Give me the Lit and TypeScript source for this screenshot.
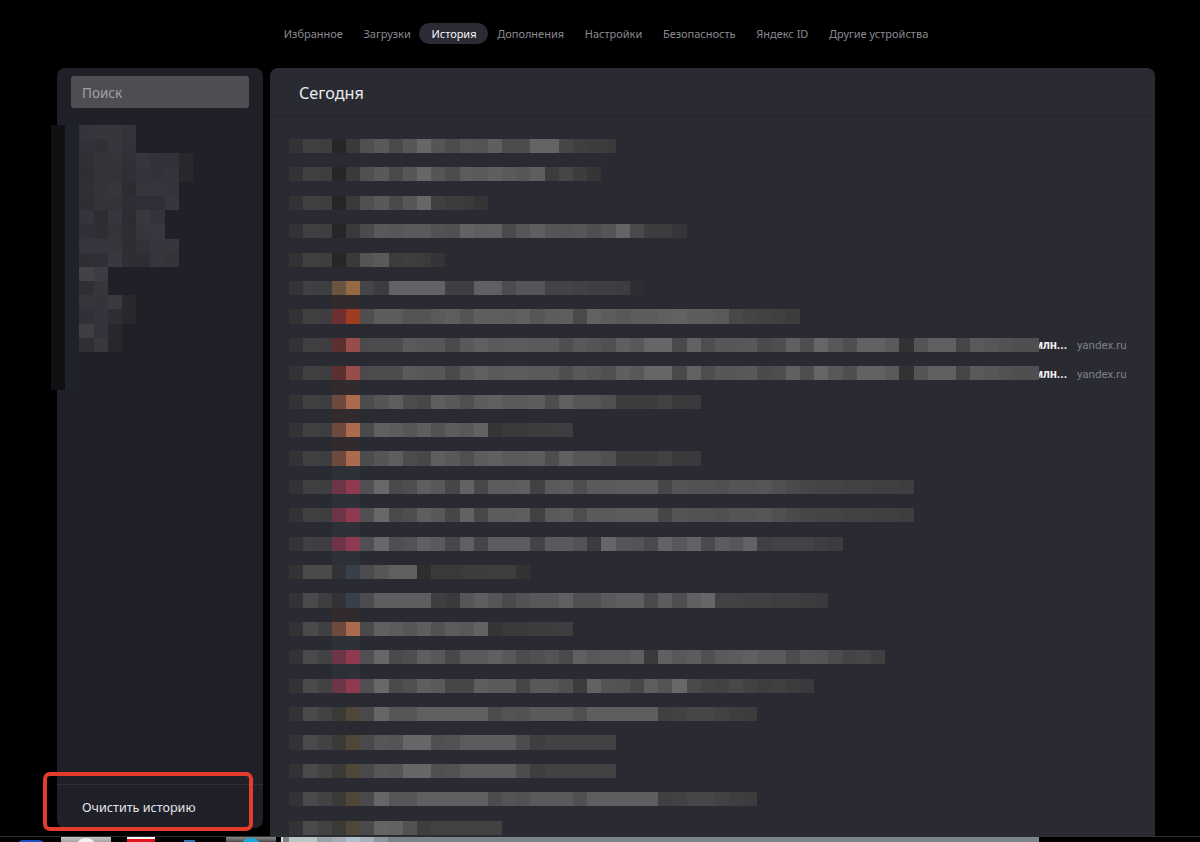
import { LitElement, html, css } from "lit";
import { customElement } from "lit/decorators.js";

const shade = (c: string) => {
  if (c.length === 6) return `#${c}`;
  const v = parseInt(c, 16);
  return `rgb(${v},${v},${v + 3})`;
};
const cells = (s: string) => s.trim().split(/\s+/).map(shade);

const BASE = "33 40 3e";
const GREY = "26 3a";
const AMBER = "6a5340 956a40";
const RUST = "6d2f2f a03d20";
const BRICK = "5c2f30 974d4a";
const COPPER = "6e4a3c aa6c4c";
const ROSE = "6c3548 903a52";
const STEEL = "33 36404a";
const OLIVE = "3a3a36 4f4838";
const WARM = "332a2e 322b2e";
const COOL = "2e3038 2f3139";

const R1 = "50 59 4a 57 67 55 4c 56 54 5f 4c 4d 64 64 46 3f 3d 3b";
const R2 = "50 59 4a 57 67 55 4c 5c 5a 5f 5a 56 5e 3c 46 3d 35";
const R3 = "50 59 4a 57 67 40 3c 3b 35";
const R4 = "4b 59 57 5a 5a 52 50 63 5e 60 4a 56 5f 55 54 56 4f 55 64 4a 3d 3c 36";
const R5 = "55 5b 3c 3e 3b 34";
const R6 = "46 3d 62 62 62 62 3f 3e 60 60 4c 55 55 43 43 41 3f 3f 3d 2e";
const R7 = "4e 5c 5c 54 54 5a 5e 54 5e 5e 5c 60 56 5c 5e 4a 62 5c 58 5c 5c 60 62 5c 5c 5a 48 44 42 40 3c";
const R8 = "4b 4d 4d 5a 57 57 4a 59 60 5a 5c 5c 5a 5a 4f 59 55 50 5f 58 66 66 4a 62 4e 57 57 58 4b 4e 60 4e 66 58 4f 62 62 5a 32 54 60 60 46 5a 56 52 4f 4f";
const R10 = "4c 55 5e 4c 48 5e 58 50 5c 60 5a 5a 5c 4d 60 56 56 50 3c 3c 3d 42 3b 3a";
const R11 = "4a 60 5c 56 5e 52 5c 58 62 35 3a 3a 3c 3d 3e";
const R13 = "50 68 4a 4e 5e 58 47 62 48 5c 5c 5e 42 5a 5c 4e 5a 5a 5c 5c 5c 46 54 52 52 50 54 54 56 50 4a 46 44 44 42 42 40 40 3e";
const R15 = "50 68 4e 52 60 5a 48 60 46 5c 5c 5c 44 5a 5a 52 3c 66 56 54 4a 62 58 62 4a 5c 56 62 40 42 44 42 3e 3c";
const R16 = "4c 56 60 60 2e 3a 3a 3c 3c 3e 3e 33";
const R17 = "4c 5e 5e 5e 5e 3f 3b 56 5e 56 4a 52 58 58 60 50 50 5a 5e 5e 4a 5c 4e 60 66 42 42 40 40 3e 3e 3c 3a";
const R19 = "50 66 4a 4e 5e 58 48 5a 5a 60 58 4c 50 54 4a 60 58 5a 5a 5e 3a 60 58 5c 50 5a 5c 60 5a 5a 4c 56 54 4c 44 46 40";
const R20 = "50 68 4a 50 5e 5a 46 46 5e 5a 5a 46 58 58 50 3c 62 54 52 48 5e 54 68 4a 44 42 48 42 3e 40 3c 3a";
const R21 = "4a 66 56 56 60 60 60 60 60 4c 54 52 5a 5a 5a 50 5e 5e 5e 5e 5e 40 42 46 46 42 3e 3c";
const R22 = "4a 56 54 66 66 50 52 5c 5c 5c 5c 4c 3e 42 42 42 42 42";

interface Row {
  c: string;
  tint?: string;
  trail?: boolean;
}

const rows: Row[] = [
  { c: `${BASE} ${GREY} ${R1}` },
  { c: `${BASE} ${GREY} ${R2}` },
  { c: `${BASE} ${GREY} ${R3}` },
  { c: `${BASE} ${GREY} ${R4}` },
  { c: `${BASE} ${GREY} ${R5}` },
  { c: `${BASE} ${AMBER} ${R6}`, tint: WARM },
  { c: `${BASE} ${RUST} ${R7}` },
  { c: `${BASE} ${BRICK} ${R8}`, trail: true },
  { c: `${BASE} ${BRICK} ${R8}`, trail: true, tint: WARM },
  { c: `${BASE} ${COPPER} ${R10}`, tint: WARM },
  { c: `${BASE} ${COPPER} ${R11}`, tint: WARM },
  { c: `${BASE} ${COPPER} ${R10}`, tint: COOL },
  { c: `${BASE} ${ROSE} ${R13}`, tint: COOL },
  { c: `${BASE} ${ROSE} ${R13}`, tint: COOL },
  { c: `${BASE} ${ROSE} ${R15}`, tint: COOL },
  { c: `33 4a 4a ${STEEL} ${R16}` },
  { c: `33 4a 3e ${STEEL} ${R17}`, tint: WARM },
  { c: `33 4a 40 ${COPPER} ${R11}`, tint: COOL },
  { c: `33 4a 42 ${ROSE} ${R19}`, tint: COOL },
  { c: `33 4a 42 ${ROSE} ${R20}` },
  { c: `33 4a 42 ${OLIVE} ${R21}` },
  { c: `33 4a 42 ${OLIVE} ${R22}` },
  { c: `33 4a 42 ${OLIVE} ${R22}` },
  { c: `33 4a 42 ${OLIVE} ${R21}` },
  { c: `33 4a 42 ${OLIVE} 4a 64 62 52 3e 42 42 42 42 42` },
];

const side = [
  "33343c 36363c 36373b 33343a",
  "30313a 303136 36373c 31323a",
  "2f3034 34353b 34353a 303136 34353d 32333a 313238 27282b",
  "2e2f33 34353a 33343a 2f3035 33343b 31323a 34353b 27282b",
  "2f3034 34353a 36373c 2c2d30 35363d 35363d 34353b",
  "2e2f35 34353b 33343a 2e2f34 2f3037 2f3035 36373e",
  "33343c 2d2e31 36373c 2c2c34 38393c 33333b",
  "2f3038 2e2f33 34353b 2e2f33 36373a 37383f",
  "35363d 35363d 36373c 2e2f33 31323a 36373e 36373c",
  "2e2f33 2e3036 383940 2e2f33 2e2f36 36373c 34353b",
  "424347 3c3d42",
  "2e2f33 36373b",
  "35363c 34353b 3a3b41 28292c",
  "303138 34353c 2e2f34 28292c",
  "3e3f43 33343b 28292c",
  "2e3036 38393e 26282b",
  "",
  "",
  "",
];

const tabs = ["Избранное", "Загрузки", "История", "Дополнения", "Настройки", "Безопасность", "Яндекс ID", "Другие устройства"];
const barCells = ["b9c7c4", "b9c7c4", "9ba3aa", "a5acb2", "b4c0d0", "a9b1bd", "8f969d"];

@customElement("app-root")
export class AppRoot extends LitElement {
  static styles = css`
    :host {
      display: flex;
      flex-direction: column;
      height: 842px;
      overflow: hidden;
      background: #000;
      font-family: "Noto Sans", "Open Sans", sans-serif;
      position: relative;
    }
    nav {
      height: 68px;
      flex: none;
      box-sizing: border-box;
      display: flex;
      align-items: flex-start;
      justify-content: center;
      padding: 23px 0 0 12px;
      font-size: 11px;
    }
    .tab {
      height: 21px;
      line-height: 22px;
      padding: 0 10.3px;
      color: #8a8a90;
      border-radius: 11px;
      white-space: nowrap;
    }
    .tab.on {
      background: #2a2b34;
      color: #f6f6f8;
      padding: 0 11px 0 12px;
      margin: 0 -0.7px 0 -1.7px;
    }
    .body {
      flex: none;
      height: 768px;
      display: flex;
      gap: 7px;
      padding-left: 57px;
      align-items: flex-start;
    }
    aside {
      position: relative;
      width: 206px;
      height: 760px;
      box-sizing: border-box;
      background: #202128;
      border-radius: 8px;
      display: flex;
      flex-direction: column;
      padding-top: 8px;
    }
    .search {
      margin-left: 14px;
      width: 178px;
      height: 32px;
      box-sizing: border-box;
      padding-left: 11px;
      background: #4d4d52;
      border-radius: 3px;
      color: #a2a2a6;
      font-size: 13.5px;
      line-height: 34px;
    }
    .spacer {
      flex: 1;
    }
    .clear {
      height: 43px;
      border-top: 1px solid #303136;
      padding-left: 25px;
      color: #e6e6ea;
      font-size: 12.6px;
      line-height: 45px;
    }
    .blur {
      position: absolute;
      left: -6px;
      top: 57px;
      height: 265px;
      overflow: hidden;
      display: flex;
      flex-direction: column;
    }
    .blur .line {
      display: flex;
      flex: none;
      height: 14.2px;
    }
    .annot {
      position: absolute;
      left: 43px;
      top: 772px;
      width: 210px;
      height: 59px;
      box-sizing: border-box;
      border: 4px solid #e63c2e;
      border-radius: 7px;
    }
    main {
      width: 885px;
      height: 768px;
      background: #2a2b32;
      border-radius: 8px 8px 0 0;
      overflow: hidden;
      display: flex;
      flex-direction: column;
    }
    header {
      flex: none;
      height: 49px;
      box-sizing: border-box;
      padding-left: 29px;
      border-bottom: 1px solid #222327;
      color: #ececef;
      font-size: 16.2px;
      line-height: 50px;
    }
    .list {
      padding: 21.9px 0 0 19.3px;
      display: flex;
      flex-direction: column;
    }
    .row,
    .gap {
      display: flex;
      flex: none;
      height: 14.215px;
      align-items: center;
      font-family: Roboto, "Noto Sans", sans-serif;
      font-size: 11.5px;
    }
    .cell {
      flex: none;
      width: 14.2px;
      height: 14.2px;
    }
    .mosaic {
      display: flex;
      overflow: hidden;
      position: relative;
      z-index: 1;
    }
    .mosaic.trail {
      width: 749.7px;
    }
    .gap {
      padding-left: 42.6px;
    }
    .cut {
      margin-left: -5px;
      width: 34px;
      padding-top: 1px;
      color: #f0f0f2;
      font-weight: 700;
      font-size: 12px;
      white-space: nowrap;
    }
    .site {
      margin-left: 9px;
      padding-top: 1px;
      color: #808086;
    }
    .taskbar {
      flex: none;
      height: 6px;
      border-top: 1px solid #2e2f30;
      box-sizing: content-box;
      display: flex;
      background: #000;
      overflow: hidden;
    }
    .win {
      margin-left: 17px;
      width: 28px;
      height: 6px;
      margin-top: 3px;
      background: #1d4fc0;
      border-radius: 8px 8px 0 0;
    }
    .btn {
      margin-left: 16px;
      width: 50px;
      background: linear-gradient(#c4c4c4, #9d9d9d);
      display: flex;
      justify-content: center;
    }
    .btn i {
      display: block;
      width: 22px;
      height: 22px;
      margin-top: 1px;
      border-radius: 50%;
      background: #f0f0f0;
    }
    .red {
      margin-left: 16px;
      width: 28px;
      border-top: 2px solid #f5f5f5;
      background: #e0141c;
    }
    .doc {
      margin: 3px 0 0 29px;
      width: 11px;
      background: #3b6fb8;
    }
    .btn.dark {
      margin-left: 31px;
      background: linear-gradient(#8a8a8a, #3d3d3d);
    }
    .btn.dark i {
      background: #1ba6e0;
    }
    .bar {
      margin-left: 5px;
      width: 758px;
      box-sizing: border-box;
      background: #7c8289;
      display: flex;
      border-left: 2px solid #d8d8d8;
      padding-left: 6px;
    }
    .bar .cell {
      height: 6px;
    }
  `;

  private mosaic(r: Row) {
    return html`<div class="mosaic ${r.trail ? "trail" : ""}">
      ${cells(r.c).map((c) => html`<div class="cell" style="background:${c}"></div>`)}
    </div>`;
  }

  render() {
    return html`
      <nav>
        ${tabs.map((t) => html`<div class="tab ${t === "История" ? "on" : ""}">${t}</div>`)}
      </nav>
      <div class="body">
        <aside>
          <div class="search">Поиск</div>
          <div class="spacer"></div>
          <div class="clear">Очистить историю</div>
          <div class="blur">
            ${side.map(
              (l) => html`<div class="line">
                <div class="cell" style="background:#111114"></div>
                <div class="cell" style="background:#20222b"></div>
                ${l ? l.split(" ").map((c) => html`<div class="cell" style="background:#${c}"></div>`) : ""}
              </div>`
            )}
          </div>
        </aside>
        <main>
          <header>Сегодня</header>
          <div class="list">
            ${rows.map(
              (r) => html`
                <div class="row">
                  ${this.mosaic(r)}
                  ${r.trail
                    ? html`<span class="cut">млн...</span><span class="site">yandex.ru</span>`
                    : ""}
                </div>
                <div class="gap">
                  ${r.tint ? cells(r.tint).map((c) => html`<div class="cell" style="background:${c}"></div>`) : ""}
                </div>
              `
            )}
          </div>
        </main>
      </div>
      <div class="taskbar">
        <div class="win"></div>
        <div class="btn"><i></i></div>
        <div class="red"></div>
        <div class="doc"></div>
        <div class="btn dark"><i></i></div>
        <div class="bar">
          ${barCells.map((c) => html`<div class="cell" style="background:#${c}"></div>`)}
        </div>
      </div>
      <div class="annot"></div>
    `;
  }
}
